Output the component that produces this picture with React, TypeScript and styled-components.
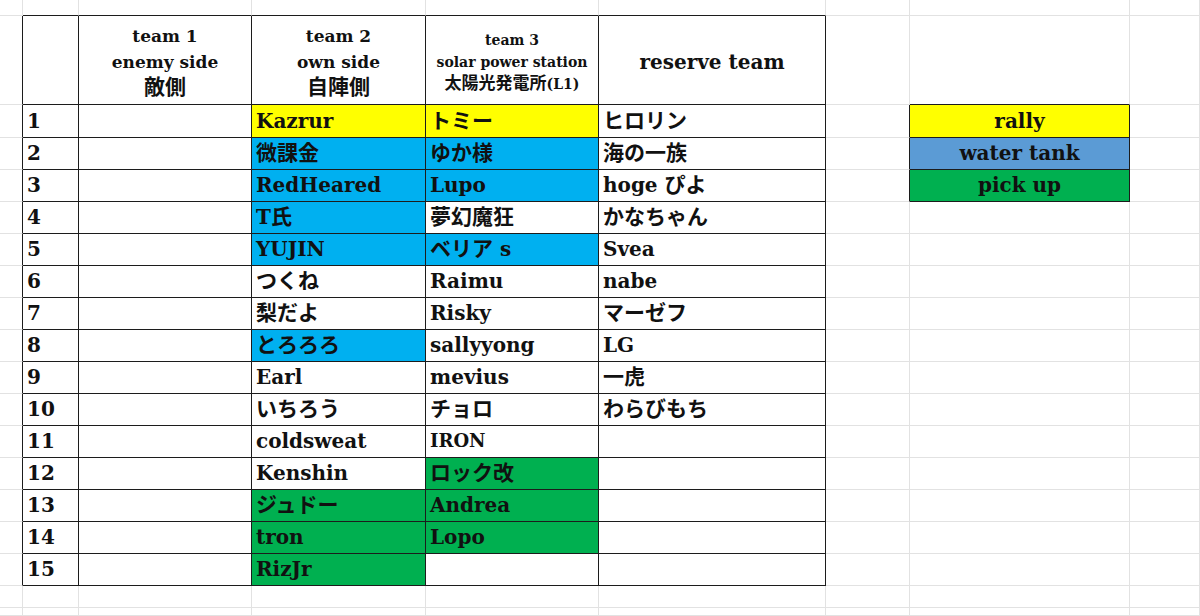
import React from 'react';
import styled, { createGlobalStyle } from 'styled-components';

const SERIF = '"DejaVu Serif", "Liberation Serif", serif';
const GOTHIC = '"Noto Sans CJK JP", "Noto Sans", sans-serif';

const LIGHT = '#e2e2e2';
const DARK = '#1c1c1c';

const FILLS = {
  yellow: '#ffff00',
  blue: '#00b0f0',
  green: '#00b050',
  steel: '#5b9bd5',
} as const;

type FillKey = keyof typeof FILLS;

const GlobalStyle = createGlobalStyle`
  html, body {
    margin: 0;
    padding: 0;
    background: #ffffff;
  }
  body {
    overflow: hidden;
    font-family: ${SERIF};
    color: #111111;
  }
`;

const Sheet = styled.div`
  display: flex;
  flex-direction: column;
  width: 1200px;
  height: 616px;
  overflow: hidden;
  background: #ffffff;
`;

const SheetRow = styled.div<{ $h?: number }>`
  display: flex;
  flex: ${(p) => (p.$h ? `0 0 ${p.$h}px` : '1 1 auto')};
  min-height: 0;
`;

const Cell = styled.div<{
  $w?: number;
  $fill?: FillKey;
  $right?: boolean;
  $bottom?: boolean;
  $center?: boolean;
}>`
  box-sizing: border-box;
  flex: ${(p) => (p.$w ? `0 0 ${p.$w}px` : '1 1 auto')};
  min-width: 0;
  background: ${(p) => (p.$fill ? FILLS[p.$fill] : '#ffffff')};
  border-right: 1px solid ${(p) => (p.$right ? DARK : LIGHT)};
  border-bottom: 1px solid ${(p) => (p.$bottom ? DARK : LIGHT)};
  display: flex;
  align-items: flex-end;
  justify-content: ${(p) => (p.$center ? 'center' : 'flex-start')};
  padding: 0 4px 3px;
  font-weight: 700;
  font-size: 20px;
  line-height: 26px;
  white-space: nowrap;
`;

const CellText = styled.span`
  display: block;
  white-space: pre;
`;

const HeaderCell = styled(Cell)`
  flex-direction: column;
  align-items: center;
  justify-content: center;
  padding: 3px 2px 0;
  text-align: center;
`;

const HeadLine = styled.div<{ $size: number; $lh: number }>`
  font-size: ${(p) => p.$size}px;
  line-height: ${(p) => p.$lh}px;
  white-space: pre;
`;

const Latin = styled.span<{ $size: number }>`
  font-family: ${SERIF};
  font-size: ${(p) => p.$size}px;
`;

const Kana = styled.span<{ $size: number }>`
  font-family: ${GOTHIC};
  font-size: ${(p) => p.$size}px;
  font-weight: 700;
  line-height: 1;
`;

const CJK_RE = /([\u3000-\u30ff\u3400-\u9fff\uff00-\uffef]+)/;

function Mixed({ text, latin, cjk }: { text: string; latin: number; cjk: number }) {
  const parts = text.split(CJK_RE).filter((p) => p.length > 0);
  return (
    <>
      {parts.map((p, i) =>
        CJK_RE.test(p) ? (
          <Kana key={i} $size={cjk}>
            {p}
          </Kana>
        ) : (
          <Latin key={i} $size={latin}>
            {p}
          </Latin>
        ),
      )}
    </>
  );
}

type Entry = { t: string; f?: FillKey; small?: boolean };

const ROWS: Entry[][] = [
  [{ t: 'Kazrur', f: 'yellow' }, { t: 'トミー', f: 'yellow' }, { t: 'ヒロリン' }],
  [{ t: '微課金', f: 'blue' }, { t: 'ゆか様', f: 'blue' }, { t: '海の一族' }],
  [{ t: 'RedHeared', f: 'blue' }, { t: 'Lupo', f: 'blue' }, { t: 'hoge ぴよ' }],
  [{ t: 'T氏', f: 'blue' }, { t: '夢幻魔狂' }, { t: 'かなちゃん' }],
  [{ t: 'YUJIN', f: 'blue' }, { t: 'ベリア s', f: 'blue' }, { t: 'Svea' }],
  [{ t: 'つくね' }, { t: 'Raimu' }, { t: 'nabe' }],
  [{ t: '梨だよ' }, { t: 'Risky' }, { t: 'マーゼフ' }],
  [{ t: 'とろろろ', f: 'blue' }, { t: 'sallyyong' }, { t: 'LG' }],
  [{ t: 'Earl' }, { t: 'mevius' }, { t: '一虎' }],
  [{ t: 'いちろう' }, { t: 'チョロ' }, { t: 'わらびもち' }],
  [{ t: 'coldsweat' }, { t: 'IRON', small: true }, { t: '' }],
  [{ t: 'Kenshin' }, { t: 'ロック改', f: 'green' }, { t: '' }],
  [{ t: 'ジュドー', f: 'green' }, { t: 'Andrea', f: 'green' }, { t: '' }],
  [{ t: 'tron', f: 'green' }, { t: 'Lopo', f: 'green' }, { t: '' }],
  [{ t: 'RizJr', f: 'green' }, { t: '' }, { t: '' }],
];

const LEGEND: Entry[] = [
  { t: 'rally', f: 'yellow' },
  { t: 'water tank', f: 'steel' },
  { t: 'pick up', f: 'green' },
];

const W = { blank: 23, num: 56, team1: 173, team2: 174, team3: 173, reserve: 227, gap: 84, legend: 220 };
const COLS = [W.blank, W.num, W.team1, W.team2, W.team3, W.reserve, W.gap, W.legend];

const TEAMS = [
  { w: W.team1, lines: ['team 1', 'enemy side', '敵側'] },
  { w: W.team2, lines: ['team 2', 'own side', '自陣側'] },
];

export default function App() {
  return (
    <>
      <GlobalStyle />
      <Sheet>
        <SheetRow $h={16}>
          {COLS.map((w, c) => (
            <Cell key={c} $w={w} $bottom={c >= 1 && c <= 5} />
          ))}
          <Cell />
        </SheetRow>

        <SheetRow $h={89}>
          <Cell $w={W.blank} $right />
          <Cell $w={W.num} $right $bottom />
          {TEAMS.map((team) => (
            <HeaderCell key={team.lines[0]} $w={team.w} $right $bottom>
              {team.lines.map((line) => (
                <HeadLine key={line} $size={17} $lh={26}>
                  <Mixed text={line} latin={17} cjk={21} />
                </HeadLine>
              ))}
            </HeaderCell>
          ))}
          <HeaderCell $w={W.team3} $right $bottom>
            <HeadLine $size={14} $lh={22}>
              team 3
            </HeadLine>
            <HeadLine $size={14} $lh={22}>
              solar power station
            </HeadLine>
            <HeadLine $size={14} $lh={22}>
              <Mixed text="太陽光発電所(L1)" latin={14} cjk={17} />
            </HeadLine>
          </HeaderCell>
          <HeaderCell $w={W.reserve} $right $bottom>
            <HeadLine $size={20} $lh={28}>
              reserve team
            </HeadLine>
          </HeaderCell>
          <Cell $w={W.gap} />
          <Cell $w={W.legend} $bottom />
          <Cell />
        </SheetRow>

        {ROWS.map((row, i) => {
          const legend = LEGEND[i];
          return (
            <SheetRow key={i} $h={i === 0 ? 33 : 32}>
              <Cell $w={W.blank} $right />
              <Cell $w={W.num} $right $bottom>
                <CellText>{i + 1}</CellText>
              </Cell>
              <Cell $w={W.team1} $right $bottom />
              {row.map((e, c) => (
                <Cell
                  key={c}
                  $w={[W.team2, W.team3, W.reserve][c]}
                  $fill={e.f}
                  $right
                  $bottom
                >
                  <CellText>
                    <Mixed text={e.t} latin={e.small ? 18 : 20} cjk={21} />
                  </CellText>
                </Cell>
              ))}
              <Cell $w={W.gap} $right={!!legend} />
              <Cell $w={W.legend} $fill={legend?.f} $right={!!legend} $bottom={!!legend} $center>
                {legend && (
                  <CellText>
                    <Mixed text={legend.t} latin={20} cjk={21} />
                  </CellText>
                )}
              </Cell>
              <Cell />
            </SheetRow>
          );
        })}

        <SheetRow $h={22}>
          {COLS.map((w, c) => (
            <Cell key={c} $w={w} />
          ))}
          <Cell />
        </SheetRow>
        <SheetRow>
          {COLS.map((w, c) => (
            <Cell key={c} $w={w} />
          ))}
          <Cell />
        </SheetRow>
      </Sheet>
    </>
  );
}
